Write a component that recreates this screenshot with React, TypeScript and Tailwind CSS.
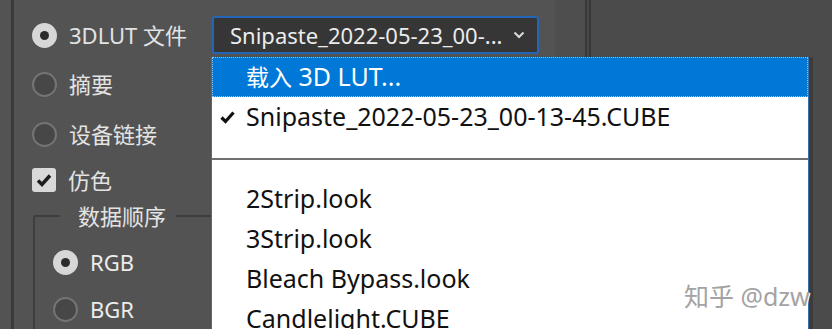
import React from "react";

const cjk = "font-['Noto_Sans','Noto_Sans_CJK_SC',sans-serif]";

function Radio(props: { checked?: boolean }) {
  if (props.checked) {
    return (
      <span className="flex h-[25px] w-[25px] shrink-0 items-center justify-center rounded-full bg-[#d7d7d7]">
        <span className="h-[9px] w-[9px] rounded-full bg-[#2c2c2c]" />
      </span>
    );
  }
  return (
    <span className="h-[25px] w-[25px] shrink-0 rounded-full border-2 border-[#747474] bg-[#474747]" />
  );
}

function Checkbox() {
  return (
    <span className="flex h-[24px] w-[24px] shrink-0 items-center justify-center rounded-[3px] bg-[#d9d9d9]">
      <svg width="18" height="18" viewBox="0 0 18 18">
        <path d="M3 9.5 L7 13.5 L15 4.5" fill="none" stroke="#1e1e1e" strokeWidth="3.5" />
      </svg>
    </span>
  );
}

function Option(props: { label: string; checked?: boolean; box?: boolean; h: string }) {
  return (
    <div className={`flex shrink-0 items-center gap-[12px] ${props.h}`}>
      {props.box ? <Checkbox /> : <Radio checked={props.checked} />}
      <span className="text-[22px] text-[#e3e3e3]">{props.label}</span>
    </div>
  );
}

const items = ["2Strip.look", "3Strip.look", "Bleach Bypass.look", "Candlelight.CUBE"];

export default function App() {
  return (
    <div className={`relative flex h-[329px] w-[832px] overflow-hidden bg-[#4b4b4b] ${cjk}`}>
      {/* main panel */}
      <div className="flex h-full w-[555px] shrink-0 bg-[#535353]">
        <div className="ml-[11px] h-full w-[3px] bg-[#3a3a3a]" />
        <div className="flex flex-col pl-[18px] pt-[10px]">
          <div className="flex h-[50px] shrink-0 items-center">
            <div className="flex w-[180px] items-center gap-[12px]">
              <Radio checked />
              <span className="text-[22px] text-[#e3e3e3]">3DLUT 文件</span>
            </div>
            <div className="flex h-[38px] w-[327px] items-center justify-between rounded-[3px] border-2 border-[#2266b5] bg-[#363636] pl-[16px] pr-[12px]">
              <span className="text-[22px] text-[#ececec]">Snipaste_2022-05-23_00-...</span>
              <svg width="12" height="8" viewBox="0 0 12 8">
                <path d="M1.5 1.5 L6 6 L10.5 1.5" fill="none" stroke="#dcdcdc" strokeWidth="2" />
              </svg>
            </div>
          </div>
          <Option label="摘要" h="h-[49px]" />
          <Option label="设备链接" h="h-[50px]" />
          <Option label="仿色" box h="h-[42px]" />
          <fieldset className="ml-[1px] mt-[2px] h-[160px] w-[200px] shrink-0 rounded-tl-[3px] border-l-2 border-t-2 border-[#3e3e3e] pl-[18px] pt-[10px]">
            <legend className="ml-[7px] pl-[18px] pr-[10px] text-[22px] leading-[26px] text-[#e3e3e3]">数据顺序</legend>
            <div className="flex h-[47px] items-center gap-[12px]">
              <Radio checked />
              <span className="text-[22px] text-[#ececec]">RGB</span>
            </div>
            <div className="flex h-[47px] items-center gap-[12px]">
              <Radio />
              <span className="text-[22px] text-[#ececec]">BGR</span>
            </div>
          </fieldset>
        </div>
      </div>
      <div className="h-full w-[30px] shrink-0 bg-[#4e4e4e]" />
      <div className="h-full w-[2px] shrink-0 bg-[#383838]" />
      <div className="h-full w-[2px] shrink-0 bg-[#494949]" />
      <div className="h-full w-[2px] shrink-0 bg-[#383838]" />

      {/* open dropdown list */}
      <div className="absolute left-[211px] top-[57px] h-[290px] w-[598px] border-x border-[#3b6fa8] bg-white shadow-[4px_0_0_#3c3c3c]">
        <div className="flex h-[40px] items-center border border-dotted border-[#9cc3e8] bg-[#0078d7] pl-[33px] text-[25px] text-white">
          <span className="text-[23px]">载入</span>&nbsp;3D LUT...
        </div>
        <div className="flex h-[40px] items-center text-[25px] text-[#111]">
          <svg className="ml-[8px] mr-[11px]" width="15" height="13" viewBox="0 0 15 13">
            <path d="M1.5 6.5 L5.5 10.5 L13.5 1.5" fill="none" stroke="#111" strokeWidth="3.2" />
          </svg>
          Snipaste_2022-05-23_00-13-45.CUBE
        </div>
        <div className="mt-[21px] h-[2px] bg-[#707070]" />
        <div className="flex flex-col pt-[19px]">
          {items.map((it) => (
            <div key={it} className="flex h-[40px] shrink-0 items-center pl-[34px] text-[25px] text-[#111]">
              {it}
            </div>
          ))}
        </div>
      </div>

      <div className="absolute left-[684px] top-[278px] text-[25px] text-[#a3a3a3] [text-shadow:1px_1px_0_#ffffff]">
        知乎 @dzw
      </div>
    </div>
  );
}
